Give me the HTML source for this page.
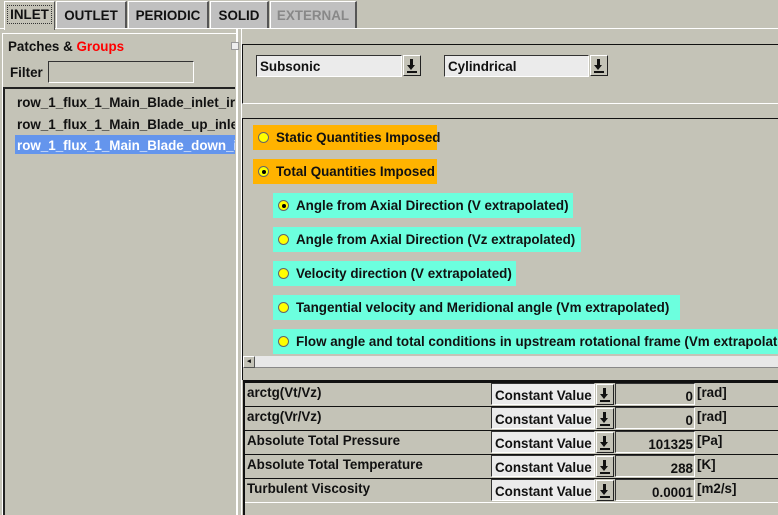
<!DOCTYPE html>
<html><head><meta charset="utf-8"><style>
*{box-sizing:border-box;margin:0;padding:0}
body{width:778px;height:515px;background:#c4c3b7;font-family:"Liberation Sans",sans-serif;font-weight:bold;font-size:13.4px;color:#111;position:relative;overflow:hidden}
.a{position:absolute;white-space:nowrap}
.tab{position:absolute;top:1px;height:27px;background:#c0c0c0;border-top:1px solid #fff;border-left:1px solid #fff;border-right:2px solid #555;padding-top:6px;text-align:center}
.sunk{border-top:1px solid #333;border-left:1px solid #333;border-bottom:1px solid #fff;border-right:1px solid #fff}
.btn{position:absolute;width:18px;height:21px;background:#c4c3b7;border-top:1px solid #fff;border-left:1px solid #fff;border-right:1px solid #222;border-bottom:1px solid #222}
.btn:before{content:"";position:absolute;left:6px;top:3px;width:3px;height:6px;background:#111}
.btn:after{content:"";position:absolute;left:3px;top:9px;width:0;height:0;border-left:4.5px solid transparent;border-right:4.5px solid transparent;border-top:5px solid #111}
.btn i{position:absolute;left:3px;top:15px;width:10px;height:2px;background:#111}
.combo{position:absolute;background:#ebebeb;padding:3px 0 0 3px;white-space:nowrap;overflow:hidden}
.or{position:absolute;left:253px;height:25px;background:#ffb300;padding:5px 0 0 23px;white-space:nowrap}
.cy{position:absolute;left:273px;height:25px;background:#6cffde;padding:5px 0 0 23px;white-space:nowrap;overflow:hidden}
.rd{position:absolute;left:5px;top:7px;width:11px;height:11px;border-radius:50%;background:#ff0;border:1px solid #666}
.rd.on:after{content:"";position:absolute;left:2.5px;top:2.5px;width:4px;height:4px;border-radius:50%;background:#000}
.row{position:absolute;left:245px;width:533px;height:23px;border-top:1px solid #111}
</style></head><body>
<div class="a" style="left:0;top:28px;width:778px;height:1px;background:#fff"></div>
<div class="tab" style="left:4px;width:51px;background:#c4c3b7;border-right:1px solid #555;height:29px;padding-top:5px"><span style="outline:1px dotted #333;padding:1px 2px">INLET</span></div>
<div class="tab" style="left:56px;width:71px">OUTLET</div>
<div class="tab" style="left:128px;width:81px">PERIODIC</div>
<div class="tab" style="left:210px;width:59px">SOLID</div>
<div class="tab" style="left:270px;width:87px;color:#888">EXTERNAL</div>

<div class="a" style="left:2px;top:33px;width:235px;height:482px;border-top:1px solid #fff;border-left:1px solid #fff"></div>
<div class="a" style="left:8px;top:39px">Patches &amp; <span style="color:#f00">Groups</span></div>
<div class="a" style="left:10px;top:65px">Filter</div>
<div class="a sunk" style="left:48px;top:61px;width:146px;height:22px;background:#c4c3b7"></div>
<div class="a" style="left:3px;top:87px;width:232px;height:428px;border-top:2px solid #222;border-left:2px solid #222;overflow:hidden">
<div class="a" style="left:12px;top:6px">row_1_flux_1_Main_Blade_inlet_ir</div>
<div class="a" style="left:12px;top:28px">row_1_flux_1_Main_Blade_up_inle</div>
<div class="a" style="left:10px;top:46px;width:220px;height:19px;background:#6495ed;color:#fff;padding:3px 0 0 2px;overflow:hidden">row_1_flux_1_Main_Blade_down_i</div>
</div>
<div class="a" style="left:236px;top:29px;width:2px;height:486px;background:#fff"></div>
<div class="a" style="left:231px;top:42px;width:8px;height:8px;background:#eee;border:1px solid #999"></div>
<div class="a" style="left:241px;top:29px;width:1px;height:486px;background:#fff"></div>

<div class="a" style="left:242px;top:44px;width:540px;height:60px;border-top:1px solid #111;border-left:1px solid #111;border-bottom:1px solid #fff"></div>
<div class="combo sunk" style="left:256px;top:55px;width:146px;height:22px">Subsonic</div>
<div class="btn" style="left:403px;top:55px"><i></i></div>
<div class="combo sunk" style="left:444px;top:55px;width:145px;height:22px">Cylindrical</div>
<div class="btn" style="left:590px;top:55px"><i></i></div>

<div class="a" style="left:242px;top:118px;width:540px;height:262px;border-top:1px solid #111;border-left:1px solid #111"></div>
<div class="or" style="top:125px;width:184px"><span class="rd"></span>Static Quantities Imposed</div>
<div class="or" style="top:159px;width:184px"><span class="rd on"></span>Total Quantities Imposed</div>
<div class="cy" style="top:193px;width:300px"><span class="rd on"></span>Angle from Axial Direction (V extrapolated)</div>
<div class="cy" style="top:227px;width:308px"><span class="rd"></span>Angle from Axial Direction (Vz extrapolated)</div>
<div class="cy" style="top:261px;width:243px"><span class="rd"></span>Velocity direction (V extrapolated)</div>
<div class="cy" style="top:295px;width:407px"><span class="rd"></span>Tangential velocity and Meridional angle (Vm extrapolated)</div>
<div class="cy" style="top:329px;width:505px"><span class="rd"></span>Flow angle and total conditions in upstream rotational frame (Vm extrapolated)</div>
<div class="a" style="left:243px;top:356px;width:535px;height:12px;background:#e8e8e8;border-bottom:1px solid #888"></div>
<div class="a" style="left:243px;top:356px;width:12px;height:12px;background:#c4c3b7;border:1px solid #fff;border-right-color:#555;border-bottom-color:#555;font-size:7px;line-height:10px;text-align:center">◂</div>

<div class="a" style="left:243px;top:380px;width:540px;height:135px;border-top:2px solid #111;border-left:2px solid #111"></div>
<div class="row" style="top:382px"></div>
<div class="row" style="top:406px"></div>
<div class="row" style="top:430px"></div>
<div class="row" style="top:454px"></div>
<div class="row" style="top:478px"></div>
<div class="row" style="top:502px;height:2px;border-top:1px solid #fff"></div>

<div class="a" style="left:247px;top:385px">arctg(Vt/Vz)</div>
<div class="a" style="left:247px;top:409px">arctg(Vr/Vz)</div>
<div class="a" style="left:247px;top:433px">Absolute Total Pressure</div>
<div class="a" style="left:247px;top:457px">Absolute Total Temperature</div>
<div class="a" style="left:247px;top:481px">Turbulent Viscosity</div>

<div class="combo sunk" style="left:491px;top:383px;width:104px;height:22px;padding-top:4px">Constant Value</div>
<div class="combo sunk" style="left:491px;top:407px;width:104px;height:22px;padding-top:4px">Constant Value</div>
<div class="combo sunk" style="left:491px;top:431px;width:104px;height:22px;padding-top:4px">Constant Value</div>
<div class="combo sunk" style="left:491px;top:455px;width:104px;height:22px;padding-top:4px">Constant Value</div>
<div class="combo sunk" style="left:491px;top:479px;width:104px;height:22px;padding-top:4px">Constant Value</div>
<div class="btn" style="left:596px;top:384px"><i></i></div>
<div class="btn" style="left:596px;top:408px"><i></i></div>
<div class="btn" style="left:596px;top:432px"><i></i></div>
<div class="btn" style="left:596px;top:456px"><i></i></div>
<div class="btn" style="left:596px;top:480px"><i></i></div>

<div class="a sunk" style="left:615px;top:383px;width:80px;height:22px;text-align:right;padding:5px 1px 0 0">0</div>
<div class="a sunk" style="left:615px;top:407px;width:80px;height:22px;text-align:right;padding:5px 1px 0 0">0</div>
<div class="a sunk" style="left:615px;top:431px;width:80px;height:22px;text-align:right;padding:5px 1px 0 0">101325</div>
<div class="a sunk" style="left:615px;top:455px;width:80px;height:22px;text-align:right;padding:5px 1px 0 0">288</div>
<div class="a sunk" style="left:615px;top:479px;width:80px;height:22px;text-align:right;padding:5px 1px 0 0">0.0001</div>
<div class="a" style="left:697px;top:385px">[rad]</div>
<div class="a" style="left:697px;top:409px">[rad]</div>
<div class="a" style="left:697px;top:433px">[Pa]</div>
<div class="a" style="left:697px;top:457px">[K]</div>
<div class="a" style="left:697px;top:481px">[m2/s]</div>
</body></html>
